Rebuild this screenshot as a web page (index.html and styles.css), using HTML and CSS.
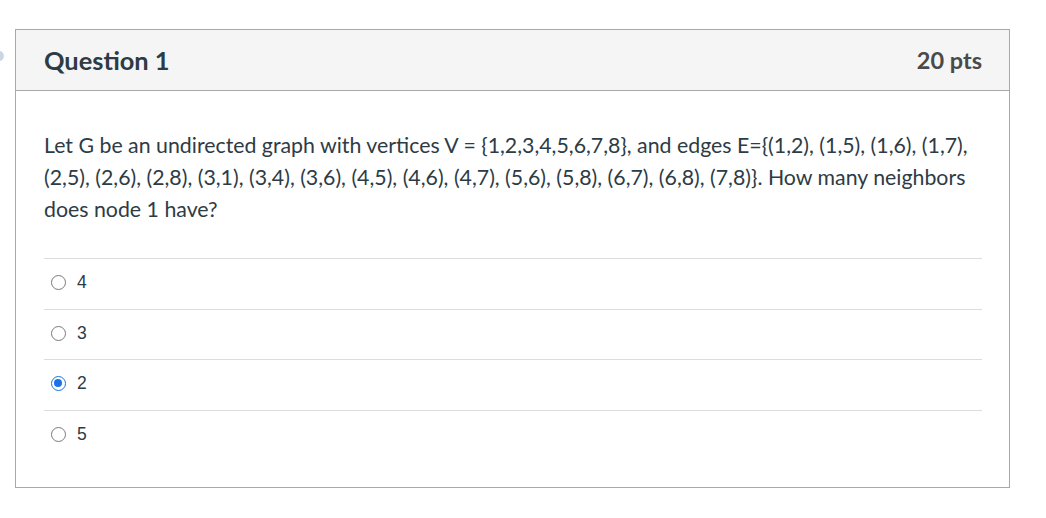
FILE: index.html
```html
<!DOCTYPE html>
<html>
<head>
<meta charset="utf-8">
<link rel="stylesheet" href="styles.css">
</head>
<body>
<div class="page">
  <span class="edge-mark"></span>
  <div class="card">
    <div class="card-header">
      <span class="title">Question 1</span>
      <span class="pts">20 pts</span>
    </div>
    <div class="card-body">
      <p class="question">Let G be an undirected graph with vertices V = {1,2,3,4,5,6,7,8}, and edges E={(1,2), (1,5), (1,6), (1,7), (2,5), (2,6), (2,8), (3,1), (3,4), (3,6), (4,5), (4,6), (4,7), (5,6), (5,8), (6,7), (6,8), (7,8)}. How many neighbors does node 1 have?</p>
      <div class="answers">
        <label class="answer"><span class="radio"></span><span class="answer-text">4</span></label>
        <label class="answer"><span class="radio"></span><span class="answer-text">3</span></label>
        <label class="answer"><span class="radio checked"></span><span class="answer-text">2</span></label>
        <label class="answer"><span class="radio"></span><span class="answer-text">5</span></label>
      </div>
    </div>
  </div>
</div>
</body>
</html>
```

FILE: styles.css
```css
html, body {
  margin: 0;
  padding: 0;
  background: #ffffff;
}

.page {
  position: relative;
  width: 1046px;
  height: 518px;
  padding: 29px 0 0 15px;
  box-sizing: border-box;
}

.edge-mark {
  position: absolute;
  left: -6px;
  top: 51px;
  width: 10px;
  height: 10px;
  border-radius: 50%;
  background: #c9d6e6;
}

.card {
  width: 995px;
  height: 459px;
  box-sizing: border-box;
  border: 1px solid #a8a8a8;
  display: flex;
  flex-direction: column;
}

.card-header {
  height: 61px;
  box-sizing: border-box;
  background: #f5f5f5;
  border-bottom: 1px solid #a8a8a8;
  display: flex;
  align-items: center;
  justify-content: space-between;
  padding: 0 27px 0 28px;
  font-family: Lato, "Open Sans", sans-serif;
  font-weight: 700;
  color: #2d3b45;
}

.title {
  font-size: 25.4px;
  color: #2d3b45;
}

.pts {
  font-size: 23.5px;
  color: #4a4a4a;
}

.card-body {
  padding: 38px 27px 0 28px;
}

.question {
  margin: 0;
  font-family: Lato, "Open Sans", sans-serif;
  font-size: 21.32px;
  line-height: 32px;
  color: #2d3b45;
}

.answers {
  margin-top: 33px;
  display: flex;
  flex-direction: column;
}

.answer {
  height: 50.7px;
  box-sizing: border-box;
  border-top: 1px solid #dcdcdc;
  display: flex;
  align-items: center;
  padding-left: 7px;
  padding-bottom: 3px;
  gap: 11px;
}

.radio {
  width: 15px;
  height: 15px;
  box-sizing: border-box;
  border: 1px solid #7a7a7a;
  border-radius: 50%;
  background: #ffffff;
  position: relative;
}

.radio.checked {
  border: 1.5px solid #1a73e8;
}

.radio.checked::after {
  content: "";
  position: absolute;
  left: 2px;
  top: 2px;
  width: 8px;
  height: 8px;
  border-radius: 50%;
  background: #1a73e8;
}

.answer-text {
  font-family: "Liberation Sans", Arial, sans-serif;
  font-size: 17.5px;
  color: #2d3b45;
}
```
